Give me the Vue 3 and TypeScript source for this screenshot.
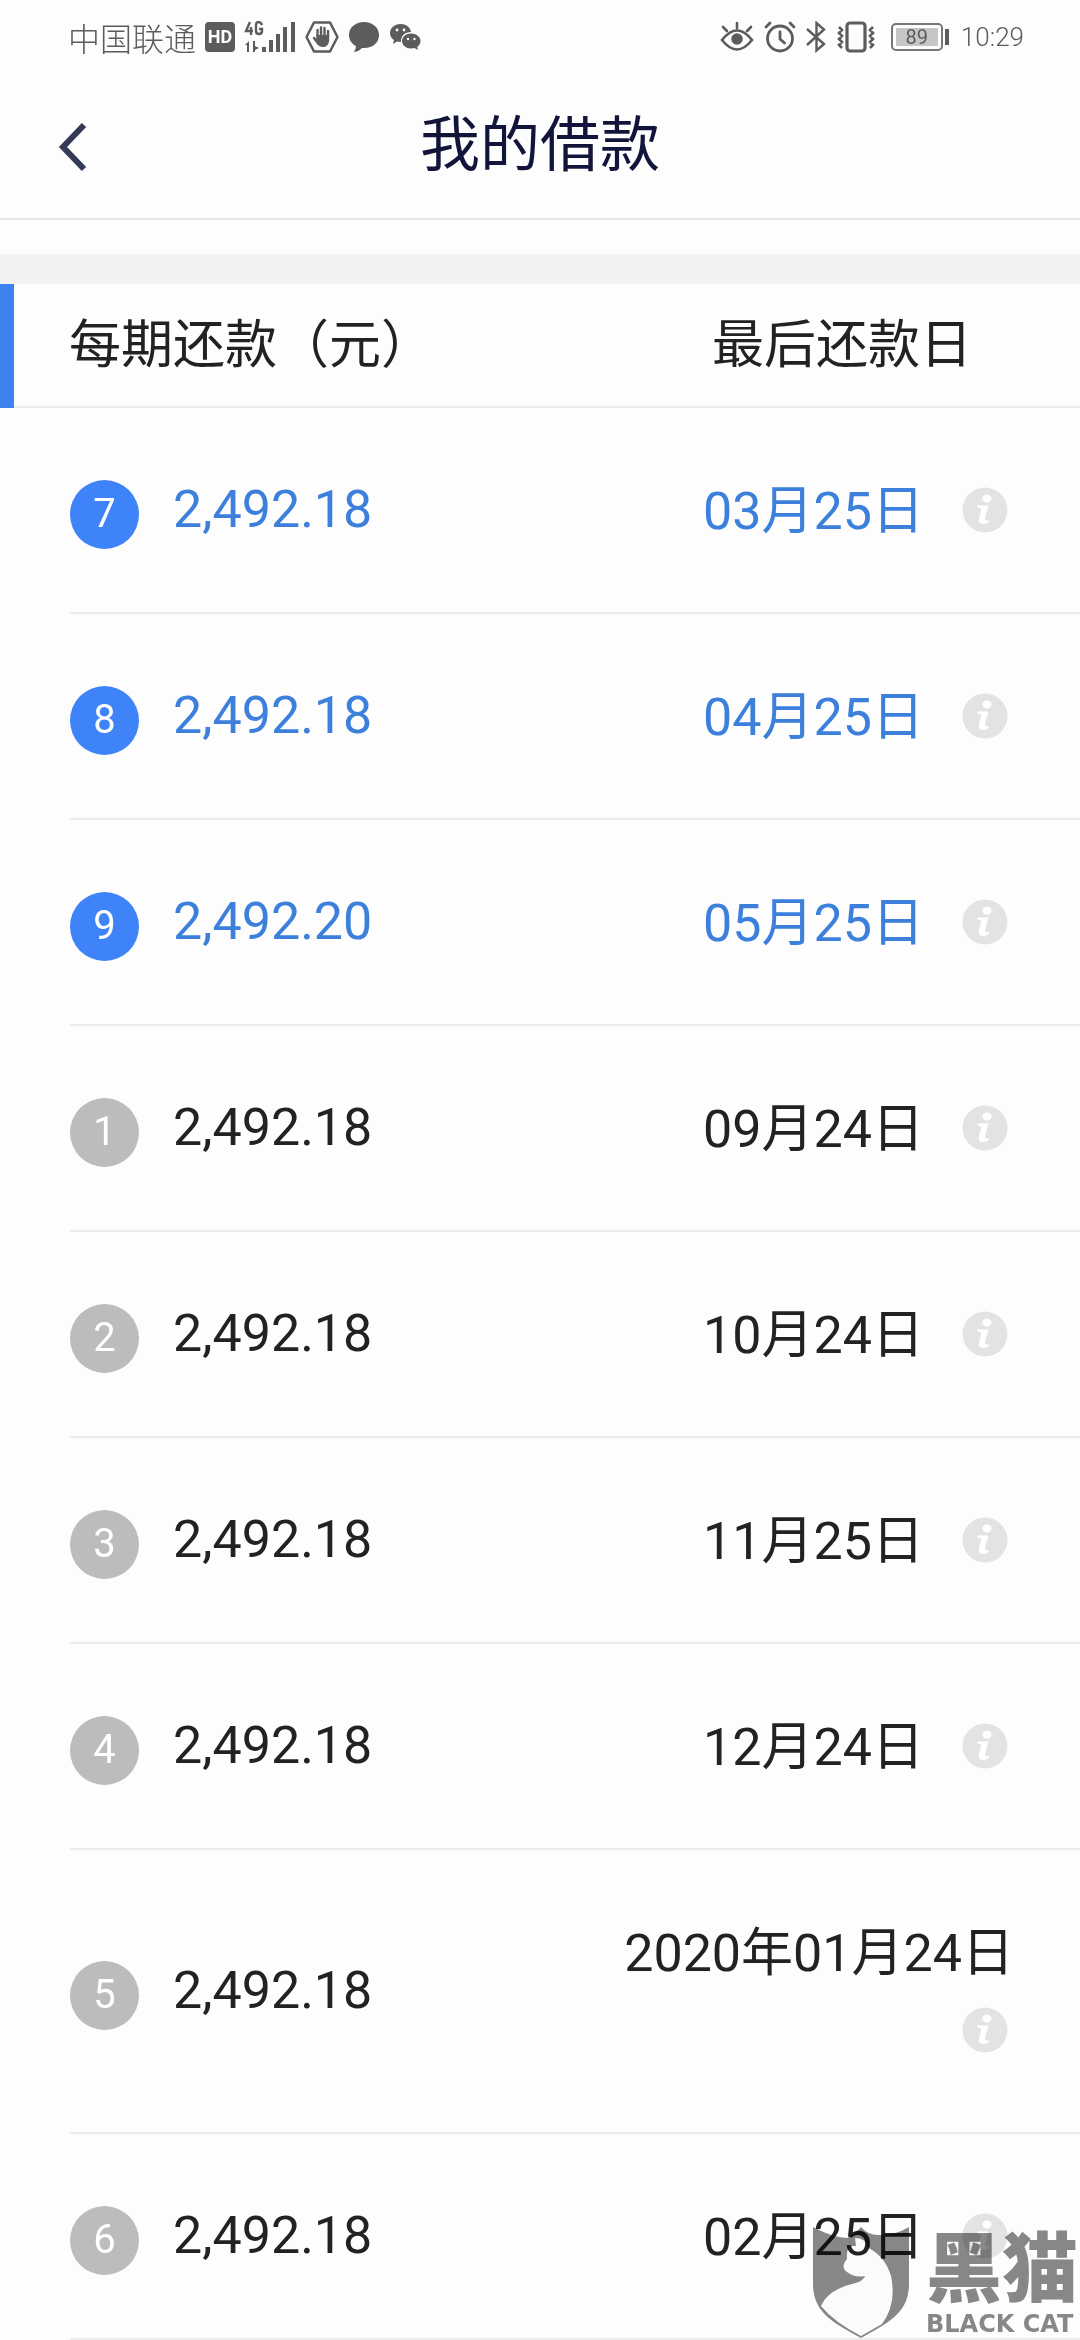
<script setup lang="ts">
interface Installment {
  no: number
  amount: string
  date: string
  due: boolean
}

const installments: Installment[] = [
  { no: 7, amount: '2,492.18', date: '03月25日', due: true },
  { no: 8, amount: '2,492.18', date: '04月25日', due: true },
  { no: 9, amount: '2,492.20', date: '05月25日', due: true },
  { no: 1, amount: '2,492.18', date: '09月24日', due: false },
  { no: 2, amount: '2,492.18', date: '10月24日', due: false },
  { no: 3, amount: '2,492.18', date: '11月25日', due: false },
  { no: 4, amount: '2,492.18', date: '12月24日', due: false },
  { no: 5, amount: '2,492.18', date: '2020年01月24日', due: false },
  { no: 6, amount: '2,492.18', date: '02月25日', due: false },
]
</script>

<template>
  <div class="page">
    <div class="status">
      <div class="status-side">
        <span class="carrier">中国联通</span>
        <span class="hd">HD</span>
        <svg class="signal" width="52" height="32" viewBox="0 0 52 32">
          <g fill="none" stroke="#5c5c5c" stroke-width="2.400">
            <path d="M6 1L2 10H9M7 6V14M18 4Q17 1 14.500 1Q12 1 12 4V10Q12 13 15 13Q18 13 18 10V8H15" />
          </g>
          <path d="M5 20V31H3V24H1ZM9 20H11V25L15 27L11 29V31H9Z" fill="#5c5c5c" />
          <path d="M18 26h4v5h-4zM25 19h4v12h-4zM32 13h4v18h-4zM39 6h4v25h-4zM47 1h4v30h-4z" fill="#5c5c5c" />
        </svg>
        <svg width="34" height="32" viewBox="0 0 34 32">
          <path d="M9 1.500H25L32.500 16L25 30.500H9L1.500 16Z" fill="none" stroke="#5c5c5c" stroke-width="2.500" stroke-linejoin="round" />
          <path d="M12.500 15V9M16 14V6.500M19.500 14V7M23 15V10M12.500 21L9 17" stroke="#5c5c5c" stroke-width="2.400" stroke-linecap="round" />
          <path d="M11.300 14H24.200V20Q23 26 18 26Q13 26 10 20L8 17Q9 15.500 11.300 18Z" fill="#5c5c5c" />
        </svg>
        <svg width="32" height="32" viewBox="0 0 32 32">
          <path d="M16 1C7.500 1 1 6.500 1 14C1 19 4 23 8 25Q8 28 6 31Q11 30.500 14 27C24 28 31 22 31 14C31 6.500 24.500 1 16 1Z" fill="#5c5c5c" />
        </svg>
        <svg width="32" height="30" viewBox="0 0 32 30">
          <path d="M11.500 2C5.500 2 1 6 1 11C1 14 2.500 16.500 5 18L4 22L8 19.500L12 20C11.500 14 16 10 22 10C21.500 5.500 17 2 11.500 2Z" fill="#5c5c5c" />
          <path d="M22 11.500C17 11.500 13 14.800 13 19C13 23.200 17 26.500 22 26.500L25.500 26L29 28L28.200 25C30.200 23.500 31.500 21.500 31.500 19C31.500 14.800 27 11.500 22 11.500Z" fill="#5c5c5c" />
          <g fill="#fdfdfd">
            <circle cx="8" cy="8" r="1.400" /><circle cx="15" cy="8" r="1.400" />
            <circle cx="19" cy="17" r="1.200" /><circle cx="25.500" cy="17" r="1.200" />
          </g>
        </svg>
      </div>
      <div class="status-side right">
        <svg width="34" height="32" viewBox="0 0 34 32" fill="none" stroke="#5c5c5c" stroke-width="2.600" stroke-linecap="round">
          <path d="M2 19Q17 0 32 19Q17 38 2 19ZM17 7V2M7 10L3 6M27 10L31 6" />
          <circle cx="17" cy="18" r="4.500" fill="#5c5c5c" />
        </svg>
        <svg width="32" height="32" viewBox="0 0 32 32" fill="none" stroke="#5c5c5c" stroke-width="2.800" stroke-linecap="round">
          <circle cx="16" cy="17.500" r="12.500" />
          <path d="M16 11V18L20.500 22M2 6L6 2M30 6L26 2" />
        </svg>
        <svg width="20" height="32" viewBox="0 0 20 32" fill="none" stroke="#5c5c5c" stroke-width="2.400">
          <path d="M1 8L18 23L10.500 29.500V2L18 8.500L1 24" />
        </svg>
        <svg width="40" height="32" viewBox="0 0 40 32" fill="none" stroke="#5c5c5c" stroke-width="2.600">
          <rect x="11" y="2" width="18" height="28" rx="3" stroke-width="3.200" />
          <path d="M3 6L6 9L3 12L6 15L3 18L6 21L3 24L6 27M37 6L34 9L37 12L34 15L37 18L34 21L37 24L34 27" />
        </svg>
        <span class="battery"><span class="level">89</span></span>
        <span class="clock">10:29</span>
      </div>
    </div>

    <header class="nav">
      <button class="back" type="button" aria-label="返回">
        <svg width="30" height="50" viewBox="0 0 30 50">
          <path d="M26 3L5 25L26 47" fill="none" stroke="#343a55" stroke-width="6" />
        </svg>
      </button>
      <h1>我的借款</h1>
    </header>

    <main>
      <div class="band"></div>
      <table>
        <thead>
          <tr>
            <th scope="col">每期还款（元）</th>
            <th scope="col">最后还款日</th>
          </tr>
        </thead>
        <tbody>
          <tr v-for="item in installments" :key="item.no" :class="{ due: item.due }">
            <td class="amount">
              <span class="badge">{{ item.no }}</span>
              <span>{{ item.amount }}</span>
            </td>
            <td class="date">
              <span>{{ item.date }}</span>
              <button class="info" type="button" aria-label="详情">
                <svg width="46" height="46" viewBox="0 0 46 46">
                  <circle cx="23" cy="23" r="22.500" fill="#e3e3e3" />
                  <ellipse cx="25" cy="11.500" rx="4.600" ry="4" fill="#fff" />
                  <path d="M15.500 18.500H26.500L23 31Q22.500 34 27.500 33.500Q25.500 37 20.500 37Q15.500 36.500 17 31L19.500 22Q17.500 20.500 15.500 20.500Z" fill="#fff" />
                </svg>
              </button>
            </td>
          </tr>
        </tbody>
      </table>
    </main>

    <div class="watermark">
      <svg width="98" height="114" viewBox="0 0 98 114">
        <path d="M1 1Q22 12 35 12Q43 8 49 1Q56 9 66 9Q82 10 97 1V58C97 88 74 98 49 112C24 98 1 88 1 58Z" fill="#888" />
        <path d="M43 12Q54 12 55 21Q73 30 79 50Q85 78 70 98L49 110Q22 96 9 80Q16 64 40 58Q52 55 53 50Q43 52 35 46Q28 41 35 33Q34 23 39 20L44 20Z" fill="#fdfdfd" />
      </svg>
      <div class="brand">
        <span class="brand-cn">黑猫</span>
        <span class="brand-en">BLACK CAT</span>
      </div>
    </div>
  </div>
</template>

<style>
body {
  margin: 0;
  background: #fdfdfd;
}
</style>

<style scoped>
.page {
  position: relative;
  overflow: hidden;
  background: #fdfdfd;
  color: #222;
  font-family: Roboto, "Noto Sans CJK SC", sans-serif;
}

svg {
  display: block;
  flex: none;
}

.status {
  display: flex;
  justify-content: space-between;
  align-items: center;
  height: 74px;
  padding: 0 56px 0 68px;
  color: #5c5c5c;
}

.status-side {
  display: flex;
  align-items: center;
  gap: 9px;
}

.right {
  gap: 10px;
}

.carrier {
  font-size: 32px;
  font-weight: 300;
}

.hd {
  width: 30px;
  border-radius: 4px;
  background: #5c5c5c;
  color: #fdfdfd;
  font-size: 18px;
  font-weight: 700;
  line-height: 30px;
  text-align: center;
}

.battery {
  position: relative;
  box-sizing: border-box;
  width: 52px;
  height: 28px;
  margin: 0 8px 0 5px;
  padding: 3px;
  border: 2px solid #777;
  border-radius: 5px;
}

.battery::after {
  content: "";
  position: absolute;
  top: 4px;
  right: -8px;
  width: 4px;
  height: 16px;
  background: #5c5c5c;
}

.level {
  display: block;
  background: #c6c6c6;
  font-size: 20px;
  line-height: 18px;
  text-align: center;
}

.clock {
  font-size: 26px;
  font-weight: 300;
  line-height: 32px;
}

.nav {
  display: flex;
  align-items: center;
  justify-content: center;
  position: relative;
  height: 144px;
  border-bottom: 2px solid #e6e6e6;
}

.back {
  position: absolute;
  left: 58px;
  top: 48px;
  padding: 0;
  border: 0;
  background: none;
}

h1 {
  margin: 0;
  color: #12153a;
  font-size: 60px;
  font-weight: 400;
  line-height: 144px;
}

.band {
  height: 30px;
  margin-top: 34px;
  background: #f2f2f2;
}

table,
thead,
tbody {
  display: block;
}

thead tr {
  display: flex;
  justify-content: space-between;
  padding: 0 108px 0 69px;
  box-shadow: inset 14px 0 #3d82ee, inset 0 -2px #ececec;
}

th {
  padding: 0;
  font-size: 52px;
  font-weight: 400;
  line-height: 124px;
}

tbody tr {
  display: flex;
  align-items: center;
  justify-content: space-between;
  margin-left: 70px;
  padding: 61px 66px 61px 0;
  border-bottom: 2px solid #ececec;
}

td {
  padding: 0;
  font-size: 52px;
  line-height: 78px;
}

.due {
  color: #3c80dc;
}

.amount {
  display: flex;
  align-items: center;
  gap: 34px;
}

.badge {
  width: 69px;
  height: 69px;
  margin-top: 9px;
  border-radius: 50%;
  background: #bcbcbc;
  color: #fff;
  font-size: 40px;
  line-height: 67px;
  text-align: center;
}

.due .badge {
  background: #3f83f8;
}

.date {
  width: 406px;
  padding-top: 4px;
  text-align: right;
}

.info {
  display: inline-block;
  margin: 14px 6px 0 38px;
  padding: 0;
  border: 0;
  background: none;
  line-height: 46px;
  vertical-align: top;
}

.watermark {
  position: absolute;
  right: 2px;
  bottom: 0;
  display: flex;
  align-items: flex-end;
  gap: 16px;
  color: #888;
  mix-blend-mode: multiply;
}

.brand {
  display: flex;
  flex-direction: column;
}

.brand-cn {
  font-size: 76px;
  font-weight: 900;
  line-height: 76px;
}

.brand-en {
  font-family: "DejaVu Sans", sans-serif;
  font-size: 24px;
  font-weight: 700;
  line-height: 32px;
  white-space: nowrap;
}
</style>
